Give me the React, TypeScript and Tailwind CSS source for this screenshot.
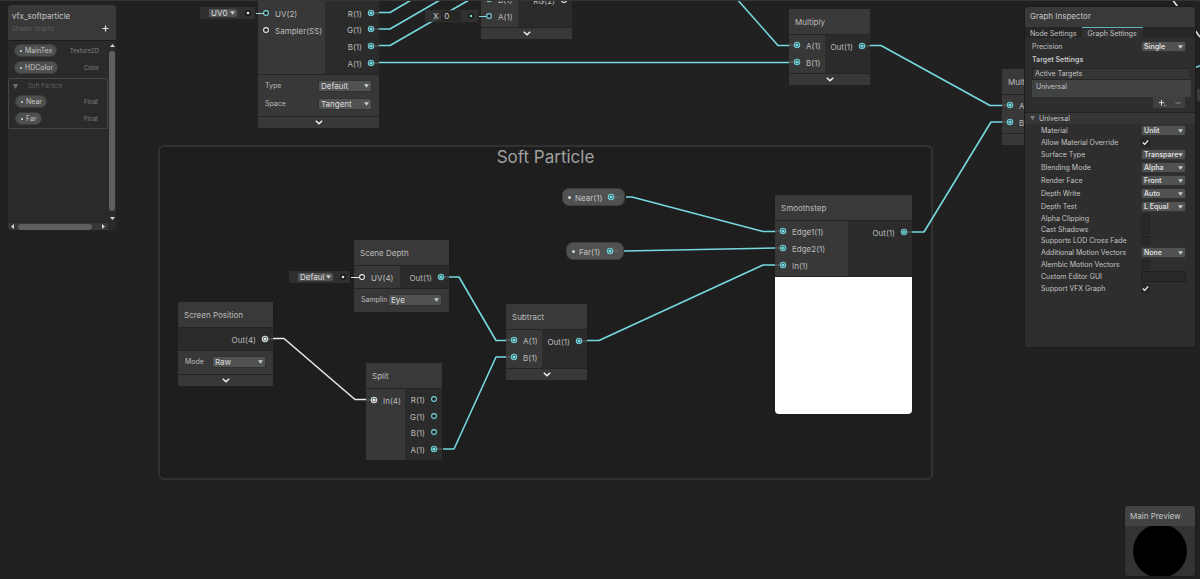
import { useId, useState } from "react";
import type { ReactNode } from "react";

type PortColor = "cyan" | "white";

interface PortInfo {
  label: string;
  color?: PortColor;
  connected?: boolean;
}

const COLORS: Record<PortColor, string> = {
  cyan: "#76d9df",
  white: "#e8e8e8",
};

// Connections between nodes, in canvas coordinates
const EDGES: { points: string; color: PortColor }[] = [
  { points: "379,12.5 390,12.5 430,-11", color: "cyan" },
  { points: "379,29 390,29 440,0", color: "cyan" },
  { points: "379,45.5 390,45.5 469,0", color: "cyan" },
  { points: "379,62.5 789,62.5", color: "cyan" },
  { points: "736,-2 778,45.5 789,45.5", color: "cyan" },
  { points: "870,45.5 881,45.5 990,105.5 1002,105.5", color: "cyan" },
  { points: "912,232 924,232 991,122 1002,122", color: "cyan" },
  { points: "626,197 632,197 763,231.5 775,231.5", color: "cyan" },
  { points: "624,251 775,248", color: "cyan" },
  { points: "587,340.5 599,340.5 763,265 775,265", color: "cyan" },
  { points: "449,277 459,277 496,340.5 507,340.5", color: "cyan" },
  { points: "443,449 454,449 496,357 507,357", color: "cyan" },
  { points: "273,338.5 284,338.5 355,399.5 366,399.5", color: "white" },
  { points: "1172,-1 1200,37", color: "white" },
  { points: "1194,68 1202,65", color: "cyan" },
];

function Arrow() {
  return (
    <svg className="pointer-events-none mr-[2px] h-[4px] w-[5px] shrink-0" viewBox="0 0 5 4" aria-hidden="true">
      <path d="M0 0.2h5L2.500 3.700z" fill="#c9cfcf" />
    </svg>
  );
}

function Dropdown({ id, label, value, className }: { id?: string; label?: string; value: string; className: string }) {
  return (
    <span className={`flex shrink-0 items-center rounded-xs border border-[#323232] bg-[#515353] ${className}`}>
      <select
        id={id}
        aria-label={label}
        defaultValue={value}
        className="min-w-0 flex-1 appearance-none bg-transparent pl-[2px] text-[#dedede] outline-none"
      >
        <option>{value}</option>
      </select>
      <Arrow />
    </span>
  );
}

function PortDot({ color, connected, side }: { color: PortColor; connected: boolean; side: "in" | "out" }) {
  const stroke = COLORS[color];
  const cx = side === "in" ? 8 : 4;
  return (
    <svg className="h-[10px] w-[12px] shrink-0" viewBox="0 0 12 10" aria-hidden="true">
      {connected ? (
        <>
          <path d={side === "in" ? "M0 5h5" : "M7 5h5"} stroke="#6a7474" strokeWidth="0.8" />
          <circle cx={cx} cy="5" r="2.7" fill="#2f5355" stroke={stroke} strokeWidth="1.1" opacity="0.9" />
          <circle cx={cx} cy="5" r="1.6" fill={stroke} />
        </>
      ) : (
        <circle cx={cx} cy="5" r="2.4" fill="#1d1d1d" stroke={stroke} strokeWidth="1.1" />
      )}
    </svg>
  );
}

function PortRow({ port, side }: { port: PortInfo; side: "in" | "out" }) {
  const dot = <PortDot color={port.color ?? "cyan"} connected={port.connected ?? false} side={side} />;
  return (
    <li className={`flex flex-1 items-center gap-[5px] ${side === "out" ? "justify-end" : ""}`}>
      {side === "in" && dot}
      <span className="pt-[2px] whitespace-nowrap">{port.label}</span>
      {side === "out" && dot}
    </li>
  );
}

interface NodeProps {
  title?: string;
  className: string;
  heightClass: string;
  inputClass?: string;
  inputs?: PortInfo[];
  outputs: PortInfo[];
  outputRowsClass?: string;
  inputRowsClass?: string;
  settings?: { label: string; value: string }[];
  collapsible?: boolean;
  children?: ReactNode;
}

function GraphNode({
  title,
  className,
  heightClass,
  inputClass = "",
  inputs = [],
  outputs,
  inputRowsClass = "h-full",
  outputRowsClass = "h-full",
  settings = [],
  collapsible = true,
  children,
}: NodeProps) {
  const id = useId();
  return (
    <section className={`absolute bg-[#242424] text-[8px] leading-[10px] text-[#bcbcbc] ${className}`}>
      {title && <h2 className="flex h-[25px] items-center bg-[#393939] px-[6px]">{title}</h2>}
      <div className={`mt-px flex bg-[#2b2b2b] ${heightClass}`}>
        {inputs.length > 0 && (
          <div className={`bg-[#383838] pt-[2px] pb-[3px] ${inputClass}`}>
            <ul className={`flex flex-col ${inputRowsClass}`}>
              {inputs.map((port) => (
                <PortRow key={port.label} port={port} side="in" />
              ))}
            </ul>
          </div>
        )}
        <div className="flex-1 pt-[2px] pb-[3px]">
          <ul className={`flex flex-col ${outputRowsClass}`}>
            {outputs.map((port) => (
              <PortRow key={port.label} port={port} side="out" />
            ))}
          </ul>
        </div>
      </div>
      {settings.length > 0 && (
        <div className="mt-px bg-[#383838] px-[7px] pt-[2px] pb-[3px]">
          {settings.map((s) => (
            <div key={s.label} className="flex h-[18px] items-center justify-between">
              <label htmlFor={`${id}-${s.label}`} className="text-[7px] whitespace-nowrap">
                {s.label}
              </label>
              <Dropdown id={`${id}-${s.label}`} value={s.value} className="h-[12px] w-[54px]" />
            </div>
          ))}
        </div>
      )}
      {collapsible && (
        <button type="button" aria-label="Collapse node" className="mt-px flex h-[11px] w-full items-center justify-center bg-[#383838]">
          <svg className="h-[5px] w-[8px]" viewBox="0 0 8 5" fill="none" aria-hidden="true">
            <path d="M0.8 0.7L4 3.8L7.2 0.7" stroke="#f2f2f2" strokeWidth="1.5" />
          </svg>
        </button>
      )}
      {children}
    </section>
  );
}

// Inline default value that sits in front of an unconnected input
function InputSlot({ className, color, tailClass, children }: { className: string; color: PortColor; tailClass: string; children: ReactNode }) {
  return (
    <div className={`absolute flex h-[12px] items-center text-[8px] leading-[10px] text-[#cfcfcf] ${className}`}>
      <div className="flex h-full flex-1 items-center justify-between bg-[#333333]/85 pr-[4px] pl-[8px]">
        {children}
        <svg className="size-[6px]" viewBox="0 0 6 6" aria-hidden="true">
          <circle cx="3" cy="3" r="3" fill="#191919" />
          <circle cx="3" cy="3" r="1.3" fill={COLORS[color]} />
        </svg>
      </div>
      <div className={`ml-px h-px ${tailClass}`} />
    </div>
  );
}

function PropertyToken({ className, label }: { className: string; label: string }) {
  return (
    <div
      className={`absolute flex h-[18px] items-center rounded-[7px] border border-[#3c3d3d] bg-[#505151] pr-[5px] pl-[5px] text-[8px] leading-[10px] text-[#c4c4c4] ${className}`}
    >
      <span className="size-[3px] rounded-full bg-[#cfd6d3]" />
      <span className="flex-1 pt-[2px] pl-[4px] whitespace-nowrap">{label}</span>
      <PortDot color="cyan" connected side="out" />
    </div>
  );
}

function Canvas() {
  return (
    <div className="absolute inset-0 overflow-hidden">
      {/* Group */}
      <section className="absolute top-[145px] left-[158px] h-[335px] w-[775px] rounded-md border-2 border-[#323232] bg-[#1e1e1e]">
        <h1 className="text-center text-[17px] leading-[21px] text-[#a0a0a0]">Soft Particle</h1>
      </section>

      <svg className="absolute inset-0 size-full" fill="none" aria-hidden="true">
        {EDGES.map((edge) => (
          <polyline key={edge.points} points={edge.points} stroke={COLORS[edge.color]} strokeWidth="1.6" strokeLinejoin="round" />
        ))}
      </svg>

      {/* Texture sample */}
      <GraphNode
        className="top-[-15px] left-[258px] w-[121px]"
        heightClass="h-[88px]"
        inputClass="w-[67px]"
        inputRowsClass="mt-[17px] h-[33px]"
        inputs={[{ label: "UV(2)" }, { label: "Sampler(SS)", color: "white" }]}
        outputs={[
          { label: "RGBA(4)", connected: true },
          { label: "R(1)", connected: true },
          { label: "G(1)", connected: true },
          { label: "B(1)", connected: true },
          { label: "A(1)", connected: true },
        ]}
        settings={[
          { label: "Type", value: "Default" },
          { label: "Space", value: "Tangent" },
        ]}
      />
      {/* Combine */}
      <GraphNode
        className="top-[-12px] left-[481px] w-[91px]"
        heightClass="h-[38px]"
        inputClass="w-[37px]"
        outputRowsClass="h-[17px]"
        inputs={[{ label: "B(1)", connected: true }, { label: "A(1)" }]}
        outputs={[{ label: "RG(2)", color: "white" }]}
      />
      <GraphNode
        title="Multiply"
        className="top-[9px] left-[789px] w-[81px]"
        heightClass="h-[38px]"
        inputClass="w-[36px]"
        inputs={[
          { label: "A(1)", connected: true },
          { label: "B(1)", connected: true },
        ]}
        outputRowsClass="h-[17px]"
        outputs={[{ label: "Out(1)", connected: true }]}
      />
      <GraphNode
        title="Multiply"
        className="top-[69px] left-[1002px] w-[81px]"
        heightClass="h-[38px]"
        inputClass="w-[36px]"
        inputs={[
          { label: "A(1)", connected: true },
          { label: "B(1)", connected: true },
        ]}
        outputs={[]}
      />
      <GraphNode
        title="Scene Depth"
        className="top-[240px] left-[354px] w-[95px]"
        heightClass="h-[22px]"
        inputClass="w-[46px]"
        inputs={[{ label: "UV(4)", color: "white" }]}
        outputs={[{ label: "Out(1)", connected: true }]}
        settings={[{ label: "Samplin", value: "Eye" }]}
        collapsible={false}
      />
      <GraphNode
        title="Screen Position"
        className="top-[302px] left-[178px] w-[95px]"
        heightClass="h-[22px]"
        outputs={[{ label: "Out(4)", color: "white", connected: true }]}
        settings={[{ label: "Mode", value: "Raw" }]}
      />
      <GraphNode
        title="Split"
        className="top-[363px] left-[366px] w-[76px]"
        heightClass="h-[71px]"
        inputClass="w-[39px]"
        inputRowsClass="h-[17px]"
        inputs={[{ label: "In(4)", color: "white", connected: true }]}
        outputs={[{ label: "R(1)" }, { label: "G(1)" }, { label: "B(1)" }, { label: "A(1)", connected: true }]}
        collapsible={false}
      />
      <GraphNode
        title="Subtract"
        className="top-[304px] left-[506px] w-[81px]"
        heightClass="h-[38px]"
        inputClass="w-[36px]"
        inputs={[
          { label: "A(1)", connected: true },
          { label: "B(1)", connected: true },
        ]}
        outputRowsClass="h-[17px]"
        outputs={[{ label: "Out(1)", connected: true }]}
      />
      <GraphNode
        title="Smoothstep"
        className="top-[195px] left-[775px] w-[137px] rounded-b"
        heightClass="h-[55px]"
        inputClass="w-[73px]"
        inputs={[
          { label: "Edge1(1)", connected: true },
          { label: "Edge2(1)", connected: true },
          { label: "In(1)", connected: true },
        ]}
        outputRowsClass="h-[17px]"
        outputs={[{ label: "Out(1)", connected: true }]}
        collapsible={false}
      >
        <div className="mt-px h-[137px] rounded-b bg-white" />
      </GraphNode>

      <InputSlot className="top-[7px] left-[200px] w-[64px]" color="white" tailClass="w-[8px] bg-[#a9d6cf]">
        <Dropdown label="UV channel" value="UV0" className="h-[10px] w-[30px]" />
      </InputSlot>
      <InputSlot className="top-[10px] left-[425px] w-[62px]" color="cyan" tailClass="w-[8px] bg-[#76d9df]">
        <label htmlFor="slot-x">X</label>
        <input
          id="slot-x"
          type="text"
          defaultValue="0"
          className="mr-[4px] h-[10px] w-[20px] rounded-xs bg-[#262626] pl-[3px] outline-none"
        />
      </InputSlot>
      <InputSlot className="top-[271px] left-[289px] w-[71px]" color="white" tailClass="w-[9px] bg-[#e8e8e8]">
        <Dropdown label="Screen position" value="Defaul" className="h-[10px] w-[37px]" />
      </InputSlot>

      <PropertyToken className="top-[188px] left-[562px] w-[63px]" label="Near(1)" />
      <PropertyToken className="top-[242px] left-[566px] w-[58px]" label="Far(1)" />

      <div className="absolute top-[89px] left-[1197px] h-[12px] w-[50px] bg-[#3a3a3a]" />
      <div className="absolute inset-x-0 top-0 h-px bg-[#343434]" />
    </div>
  );
}

function BlackboardRow({ name, type }: { name: string; type: string }) {
  return (
    <li className="flex h-[17px] items-center justify-between pr-[9px] pl-[6px]">
      <button
        type="button"
        className="flex h-[13px] items-center gap-[3px] rounded-full border border-[#3c3c3c] bg-[#4e4f4f] pr-[4px] pl-[5px] text-[7px] text-[#c6c6c6]"
      >
        <span className="size-[2px] rounded-full bg-[#cfe0da]" />
        {name}
      </button>
      <span className="text-[6px] text-[#808080]">{type}</span>
    </li>
  );
}

function Blackboard() {
  return (
    <aside className="mt-[5px] flex h-[225px] w-[108px] flex-col overflow-hidden rounded-sm bg-[#2a2a2a] text-[7px] leading-[10px]">
      <header className="flex h-[36px] shrink-0 items-end justify-between border-b border-[#1c1c1c] bg-[#393939] pr-[7px] pb-[5px] pl-[4px]">
        <div>
          <h2 className="text-[8px] leading-[14px] text-[#c4c4c4]">vfx_softparticle</h2>
          <p className="text-[6px] leading-[12px] text-[#5e5e5e]">Shader Graphs</p>
        </div>
        <button type="button" aria-label="Add property" className="pb-[3px]">
          <svg className="size-[7px]" viewBox="0 0 7 7" aria-hidden="true">
            <path d="M3.5 0.5v6M0.5 3.5h6" stroke="#e4e4e4" strokeWidth="1.2" />
          </svg>
        </button>
      </header>
      <div className="flex min-h-0 flex-1">
        <div className="flex flex-1 flex-col">
          <ul className="pt-px">
            <BlackboardRow name="MainTex" type="Texture2D" />
            <BlackboardRow name="HDColor" type="Color" />
          </ul>
          <div className="mt-[2px] h-[51px] rounded-xs border border-[#454545]">
            <button type="button" className="flex h-[14px] items-center gap-[10px] pl-[4px] text-[6px] text-[#626262]">
              <svg className="h-[5px] w-[5px]" viewBox="0 0 5 5" aria-hidden="true">
                <path d="M0 0h5L2.500 5z" fill="#707070" />
              </svg>
              Soft Particle
            </button>
            <ul>
              <BlackboardRow name="Near" type="Float" />
              <BlackboardRow name="Far" type="Float" />
            </ul>
          </div>
          {/* Horizontal scrollbar */}
          <div className="mt-auto flex h-[7px] items-center justify-between bg-[#363636] px-[3px]">
            <svg className="h-[5px] w-[3px]" viewBox="0 0 3 5" aria-hidden="true">
              <path d="M3 0v5L0 2.500z" fill="#d8d8d8" />
            </svg>
            <div className="mr-[7px] h-[6px] w-[74px] rounded-full bg-[#5e5f5f]" />
            <svg className="h-[5px] w-[3px]" viewBox="0 0 3 5" aria-hidden="true">
              <path d="M0 0v5l3-2.500z" fill="#d8d8d8" />
            </svg>
          </div>
        </div>
        {/* Vertical scrollbar */}
        <div className="flex w-[8px] flex-col items-center pt-[3px] pb-[10px]">
          <svg className="h-[3px] w-[5px]" viewBox="0 0 5 3" aria-hidden="true">
            <path d="M0 3h5L2.500 0z" fill="#d8d8d8" />
          </svg>
          <div className="mt-[4px] mb-[6px] w-[6px] flex-1 rounded-full bg-[#5e5f5f]" />
          <svg className="h-[3px] w-[5px]" viewBox="0 0 5 3" aria-hidden="true">
            <path d="M0 0h5L2.500 3z" fill="#d8d8d8" />
          </svg>
        </div>
      </div>
    </aside>
  );
}

type Setting =
  | { label: string; kind: "select"; value: string }
  | { label: string; kind: "check"; checked: boolean }
  | { label: string; kind: "text" };

const SETTINGS: Setting[] = [
  { label: "Material", kind: "select", value: "Unlit" },
  { label: "Allow Material Override", kind: "check", checked: true },
  { label: "Surface Type", kind: "select", value: "Transpare" },
  { label: "Blending Mode", kind: "select", value: "Alpha" },
  { label: "Render Face", kind: "select", value: "Front" },
  { label: "Depth Write", kind: "select", value: "Auto" },
  { label: "Depth Test", kind: "select", value: "L Equal" },
  { label: "Alpha Clipping", kind: "check", checked: false },
  { label: "Cast Shadows", kind: "check", checked: false },
  { label: "Supports LOD Cross Fade", kind: "check", checked: false },
  { label: "Additional Motion Vectors", kind: "select", value: "None" },
  { label: "Alembic Motion Vectors", kind: "check", checked: false },
  { label: "Custom Editor GUI", kind: "text" },
  { label: "Support VFX Graph", kind: "check", checked: true },
];

function SettingRow({ setting }: { setting: Setting }) {
  const id = useId();
  return (
    <div className={`flex items-center pr-[9px] pl-[16px] ${setting.kind === "check" ? "h-[11px]" : "h-[13px]"}`}>
      <label htmlFor={id} className="flex-1">
        {setting.label}
      </label>
      <div className="flex w-[45px]">
        {setting.kind === "select" && <Dropdown id={id} value={setting.value} className="h-[11px] w-full font-semibold" />}
        {setting.kind === "text" && (
          <input id={id} type="text" className="h-[11px] w-full rounded-xs border border-[#1f1f1f] bg-[#292929] outline-none" />
        )}
        {setting.kind === "check" && (
          <span className="grid">
            <input
              id={id}
              type="checkbox"
              defaultChecked={setting.checked}
              className="peer col-start-1 row-start-1 size-[9px] appearance-none rounded-xs border border-[#222222] bg-[#292929]"
            />
            <svg
              className="pointer-events-none invisible col-start-1 row-start-1 size-[9px] peer-checked:visible"
              viewBox="0 0 9 9"
              fill="none"
              aria-hidden="true"
            >
              <path d="M1.800 4.500L3.600 6.300L7.200 2.500" stroke="#eeeeee" strokeWidth="1.2" />
            </svg>
          </span>
        )}
      </div>
    </div>
  );
}

function Inspector() {
  const [tab, setTab] = useState("Graph Settings");

  return (
    <aside className="mt-[6px] h-[342px] w-[172px] overflow-hidden rounded-sm border border-[#1b1b1b] bg-[#2e2e2e] text-[7px] leading-[9px] text-[#c4c4c4]">
      <h2 className="flex h-[20px] items-center bg-[#393939] pb-[2px] pl-[5px] text-[8px]">Graph Inspector</h2>
      <div role="tablist" className="flex h-[11px] bg-[#262626]">
        {["Node Settings", "Graph Settings"].map((name) => (
          <button
            key={name}
            type="button"
            role="tab"
            aria-selected={tab === name}
            onClick={() => setTab(name)}
            className={`border-t ${tab === name ? "border-[#5fb5ba] bg-[#303030] px-[6px]" : "border-transparent px-[5px]"}`}
          >
            {name}
          </button>
        ))}
      </div>

      <div className="px-[7px]">
        <div className="mt-[2px] flex h-[13px] items-center justify-between pr-[2px]">
          <label htmlFor="precision">Precision</label>
          <Dropdown id="precision" value="Single" className="h-[11px] w-[45px] font-semibold" />
        </div>
        <h3 className="flex h-[12px] items-center font-semibold">Target Settings</h3>
        <div className="mt-[3px] mr-[-3px]">
          <div className="h-[12px] rounded-t-xs border border-[#242424] bg-[#353535] pl-[2px]">Active Targets</div>
          <div className="h-[17px] bg-[#414242] pt-[2px] pl-[4px]">Universal</div>
          <div className="mr-[6px] ml-auto flex h-[11px] w-[32px] items-center justify-around rounded-b-xs bg-[#404040]">
            <button type="button" aria-label="Add target">
              <svg className="size-[8px]" viewBox="0 0 8 8" aria-hidden="true">
                <path d="M3.500 1v5.500M0.800 3.700h5.500M6.500 6.500h1" stroke="#dddddd" strokeWidth="1" />
              </svg>
            </button>
            <button type="button" aria-label="Remove target">
              <svg className="size-[6px]" viewBox="0 0 6 6" aria-hidden="true">
                <path d="M0.500 3h5" stroke="#8a8a8a" strokeWidth="1" />
              </svg>
            </button>
          </div>
        </div>
      </div>

      <button
        type="button"
        className="mt-[4px] flex h-[12px] w-full items-center gap-[4px] border-t border-[#232323] bg-[#363636] pl-[5px]"
      >
        <svg className="size-[5px]" viewBox="0 0 5 5" aria-hidden="true">
          <path d="M0 0h5L2.500 4.500z" fill="#7a7a7a" />
        </svg>
        Universal
      </button>
      {SETTINGS.map((setting) => (
        <SettingRow key={setting.label} setting={setting} />
      ))}
    </aside>
  );
}

function MainPreview() {
  return (
    <aside className="h-[72px] w-[72px] overflow-hidden rounded-sm border border-[#1b1b1b] bg-[#333333]">
      <h2 className="flex h-[20px] items-center bg-[#424444] pl-[5px] text-[8px] text-[#c4c4c4]">Main Preview</h2>
      <svg className="mx-auto h-[50px] w-[54px]" viewBox="0 0 54 50" aria-hidden="true">
        <circle cx="27" cy="25" r="27" fill="#000000" />
      </svg>
    </aside>
  );
}

export default function App() {
  return (
    <main className="relative min-h-screen overflow-hidden bg-[#212121] font-['Inter','Liberation_Sans',sans-serif]">
      <Canvas />
      {/* Floating panels */}
      <div className="pointer-events-none relative flex min-h-screen items-stretch justify-between pr-[4px] pl-[8px] *:pointer-events-auto">
        <Blackboard />
        <div className="flex flex-col items-end justify-between pb-[2px]">
          <Inspector />
          <MainPreview />
        </div>
      </div>
    </main>
  );
}
